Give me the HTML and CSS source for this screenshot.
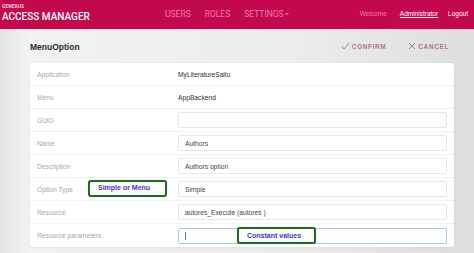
FILE: index.html
```html
<!DOCTYPE html>
<html lang="en">
<head>
    <meta charset="UTF-8">
    <meta name="viewport" content="width=device-width, initial-scale=1.0">
    <title>MenuOption - Access Manager</title>
    <link rel="stylesheet" href="styles.css">
</head>
<body>
    <header class="topbar">
        <div class="brand">
            <div class="brand-small">GENEXUS</div>
            <div class="brand-name">ACCESS MANAGER</div>
        </div>
        <nav class="main-nav">
            <a href="#">USERS</a>
            <a href="#">ROLES</a>
            <a href="#">SETTINGS<span class="caret"></span></a>
        </nav>
        <div class="user-area">
            <span class="welcome">Welcome</span>
            <a href="#" class="user-link">Administrator</a>
            <a href="#" class="logout">Logout</a>
        </div>
    </header>

    <main class="content">
        <div class="toolbar">
            <h1 class="page-title">MenuOption</h1>
            <div class="actions">
                <a href="#" class="action">
                    <svg width="9" height="8" viewBox="0 0 9 8"><path d="M0.8 4.6 L3 7 L8.4 0.8" fill="none" stroke="#b07a92" stroke-width="1"/></svg>
                    CONFIRM
                </a>
                <a href="#" class="action">
                    <svg width="8" height="8" viewBox="0 0 8 8"><path d="M1 1 L7 7 M7 1 L1 7" fill="none" stroke="#b07a92" stroke-width="1"/></svg>
                    CANCEL
                </a>
            </div>
        </div>

        <div class="card">
            <div class="row">
                <div class="label">Application</div>
                <div class="value">MyLiteratureSalto</div>
            </div>
            <div class="row">
                <div class="label">Menu</div>
                <div class="value">AppBackend</div>
            </div>
            <div class="row">
                <div class="label">GUID</div>
                <div class="field"></div>
            </div>
            <div class="row">
                <div class="label">Name</div>
                <div class="field">Authors</div>
            </div>
            <div class="row">
                <div class="label">Description</div>
                <div class="field">Authors option</div>
            </div>
            <div class="row">
                <div class="label">Option Type</div>
                <div class="field">Simple</div>
                <div class="note note-type">Simple or Menu</div>
            </div>
            <div class="row">
                <div class="label">Resource</div>
                <div class="field">autores_Execute (autores )</div>
            </div>
            <div class="row last">
                <div class="label">Resource parameters</div>
                <div class="field focused"><span class="cursor"></span></div>
                <div class="note note-params">Constant values</div>
            </div>
        </div>
    </main>
</body>
</html>
```

FILE: styles.css
```css
:root {
    --brand-color: #c2094b;
    --nav-pink: #f47cab;
    --label-color: #a9a9a9;
    --text-color: #333;
    --row-border: #f1f1f1;
    --field-border: #e6e6e6;
    --note-green: #1f6b1f;
    --note-text: #4133d6;
}

body {
    margin: 0;
    font-family: 'Liberation Sans', Arial, sans-serif;
    background: linear-gradient(to right, #e4e4e4 0, #f2f2f2 30px, #ececec 300px, #dedede 100%);
    color: var(--text-color);
    min-height: 100vh;
}

.topbar {
    height: 29px;
    background-color: var(--brand-color);
    display: flex;
    align-items: center;
    color: white;
    font-family: 'Roboto', sans-serif;
}

.brand {
    padding-left: 2px;
    width: 163px;
}

.brand-small {
    font-size: 5px;
    font-weight: 700;
    color: #f7c3d6;
    margin-top: -3px;
    line-height: 7px;
}

.brand-name {
    font-size: 10px;
    font-weight: 500;
    line-height: 13px;
}

.main-nav {
    display: flex;
    gap: 14px;
    margin-top: -2px;
}

.main-nav a {
    color: var(--nav-pink);
    text-decoration: none;
    font-size: 8.5px;
}

.caret {
    display: inline-block;
    width: 0;
    height: 0;
    border-left: 2px solid transparent;
    border-right: 2px solid transparent;
    border-top: 2px solid var(--nav-pink);
    margin-left: 1px;
    vertical-align: 2px;
}

.user-area {
    margin-left: auto;
    margin-right: 6px;
    display: flex;
    gap: 10px;
    font-family: 'Liberation Sans', Arial, sans-serif;
    font-size: 6.5px;
    margin-top: -3px;
}

.welcome {
    color: var(--nav-pink);
    margin-right: 3px;
}

.user-area a {
    color: white;
    text-decoration: none;
}

.user-area .user-link {
    text-decoration: underline;
}

.content {
    padding: 0 20px 0 30px;
}

.toolbar {
    height: 34px;
    display: flex;
    align-items: center;
}

.page-title {
    margin: 0;
    margin-top: 2px;
    font-size: 8.5px;
    font-weight: 700;
    color: #2b2b2b;
}

.actions {
    margin-left: auto;
    display: flex;
    gap: 22px;
    margin-right: 5px;
}

.action {
    display: flex;
    align-items: center;
    gap: 2px;
    color: #b3718f;
    text-decoration: none;
    font-size: 6.5px;
    font-weight: 700;
    letter-spacing: 0.6px;
}

.card {
    background: white;
    border-radius: 3px;
    box-shadow: 0 1px 3px rgba(0, 0, 0, 0.06);
}

.row {
    position: relative;
    height: 23px;
    display: flex;
    align-items: center;
    padding: 0 7px;
    border-bottom: 1px solid var(--row-border);
    box-sizing: border-box;
    font-size: 6.7px;
}

.row.last {
    border-bottom: none;
}

.label {
    width: 141px;
    color: var(--label-color);
}

.value {
    color: var(--text-color);
}

.field {
    flex: 1;
    height: 16px;
    box-sizing: border-box;
    border: 1px solid var(--field-border);
    border-radius: 2px;
    padding-left: 6px;
    display: flex;
    align-items: center;
    color: #444;
}

.field.focused {
    border-color: #a9c8ee;
}

.cursor {
    width: 1px;
    height: 8px;
    background: #777;
}

.note {
    position: absolute;
    box-sizing: border-box;
    height: 17px;
    border: 2px solid var(--note-green);
    border-radius: 3px;
    background: white;
    color: var(--note-text);
    font-size: 7px;
    font-weight: 700;
    padding: 2px 0 0 8px;
    box-shadow: 0 0 1px rgba(0, 0, 0, 0.3);
}

.note-type {
    left: 58px;
    top: 2px;
    width: 79px;
}

.note-params {
    left: 207px;
    top: 3px;
    width: 79px;
    padding-top: 3px;
}
```
